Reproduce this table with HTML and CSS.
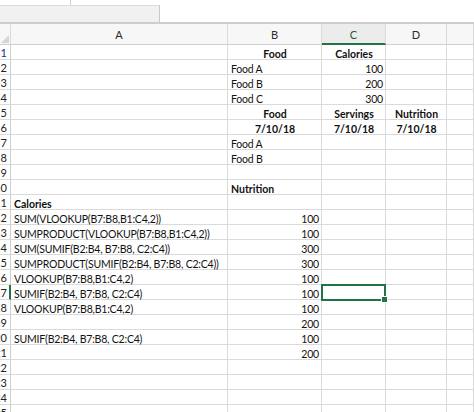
FILE: index.html
```html
<!DOCTYPE html>
<html>
<head>
<meta charset="utf-8">
<link rel="stylesheet" href="styles.css">
</head>
<body>
<div class="top">
  <div class="strip"><div class="vline"></div></div>
  <div class="strip2"><div class="namebox"></div></div>
  <div class="divider"></div>
</div>
<div class="sheet">
  <div class="hd corner"><div class="tri"></div></div>
  <div class="hd">A</div><div class="hd">B</div><div class="hd hsel">C</div><div class="hd">D</div><div class="hd"></div>

  <div class="rh rh-blue"><span>1</span></div><div class="c"></div><div class="c b ctr">Food</div><div class="c b ctr">Calories</div><div class="c"></div><div class="c"></div>
  <div class="rh"><span>2</span></div><div class="c"></div><div class="c">Food A</div><div class="c r">100</div><div class="c"></div><div class="c"></div>
  <div class="rh"><span>3</span></div><div class="c"></div><div class="c">Food B</div><div class="c r">200</div><div class="c"></div><div class="c"></div>
  <div class="rh"><span>4</span></div><div class="c"></div><div class="c">Food C</div><div class="c r">300</div><div class="c"></div><div class="c"></div>
  <div class="rh"><span>5</span></div><div class="c"></div><div class="c b ctr">Food</div><div class="c b ctr">Servings</div><div class="c b ctr">Nutrition</div><div class="c"></div>
  <div class="rh"><span>6</span></div><div class="c"></div><div class="c b ctr">7/10/18</div><div class="c b ctr">7/10/18</div><div class="c b ctr">7/10/18</div><div class="c"></div>
  <div class="rh"><span>7</span></div><div class="c"></div><div class="c">Food A</div><div class="c"></div><div class="c"></div><div class="c"></div>
  <div class="rh"><span>8</span></div><div class="c"></div><div class="c">Food B</div><div class="c"></div><div class="c"></div><div class="c"></div>
  <div class="rh"><span>9</span></div><div class="c"></div><div class="c"></div><div class="c"></div><div class="c"></div><div class="c"></div>
  <div class="rh"><span>10</span></div><div class="c"></div><div class="c b">Nutrition</div><div class="c"></div><div class="c"></div><div class="c"></div>
  <div class="rh"><span>11</span></div><div class="c b">Calories</div><div class="c"></div><div class="c"></div><div class="c"></div><div class="c"></div>
  <div class="rh"><span>12</span></div><div class="c">SUM(VLOOKUP(B7:B8,B1:C4,2))</div><div class="c r">100</div><div class="c"></div><div class="c"></div><div class="c"></div>
  <div class="rh"><span>13</span></div><div class="c">SUMPRODUCT(VLOOKUP(B7:B8,B1:C4,2))</div><div class="c r">100</div><div class="c"></div><div class="c"></div><div class="c"></div>
  <div class="rh"><span>14</span></div><div class="c">SUM(SUMIF(B2:B4, B7:B8, C2:C4))</div><div class="c r">300</div><div class="c"></div><div class="c"></div><div class="c"></div>
  <div class="rh"><span>15</span></div><div class="c">SUMPRODUCT(SUMIF(B2:B4, B7:B8, C2:C4))</div><div class="c r">300</div><div class="c"></div><div class="c"></div><div class="c"></div>
  <div class="rh"><span>16</span></div><div class="c">VLOOKUP(B7:B8,B1:C4,2)</div><div class="c r">100</div><div class="c"></div><div class="c"></div><div class="c"></div>
  <div class="rh rh-sel"><span>17</span></div><div class="c">SUMIF(B2:B4, B7:B8, C2:C4)</div><div class="c r">100</div><div class="c active"><div class="handle"></div></div><div class="c"></div><div class="c"></div>
  <div class="rh"><span>18</span></div><div class="c">VLOOKUP(B7:B8,B1:C4,2)</div><div class="c r">100</div><div class="c"></div><div class="c"></div><div class="c"></div>
  <div class="rh"><span>19</span></div><div class="c"></div><div class="c r">200</div><div class="c"></div><div class="c"></div><div class="c"></div>
  <div class="rh"><span>20</span></div><div class="c">SUMIF(B2:B4, B7:B8, C2:C4)</div><div class="c r">100</div><div class="c"></div><div class="c"></div><div class="c"></div>
  <div class="rh"><span>21</span></div><div class="c"></div><div class="c r">200</div><div class="c"></div><div class="c"></div><div class="c"></div>
  <div class="rh"><span>22</span></div><div class="c"></div><div class="c"></div><div class="c"></div><div class="c"></div><div class="c"></div>
  <div class="rh"><span>23</span></div><div class="c"></div><div class="c"></div><div class="c"></div><div class="c"></div><div class="c"></div>
  <div class="rh"><span>24</span></div><div class="c"></div><div class="c"></div><div class="c"></div><div class="c"></div><div class="c"></div>
  <div class="rh"><span>25</span></div><div class="c"></div><div class="c"></div><div class="c"></div><div class="c"></div><div class="c"></div>
</div>
</body>
</html>
```
FILE: styles.css
```css
html, body {
  margin: 0;
  padding: 0;
  background: #fff;
  overflow: hidden;
}
body {
  width: 474px;
  height: 412px;
  font-family: Lato, "Liberation Sans", sans-serif;
  color: #111;
}
.top {
  display: flex;
  flex-direction: column;
}
.strip {
  height: 5px;
  display: flex;
}
.vline {
  margin-left: 70px;
  width: 1px;
  background: #d0d0d0;
}
.strip2 {
  height: 17px;
  display: flex;
}
.namebox {
  width: 160px;
  box-sizing: border-box;
  background: #f1f1f1;
  border-top: 1px solid #dcdcdc;
  border-right: 1px solid #c8c8c8;
}
.divider {
  height: 2px;
  background: #cdcdcd;
}
.sheet {
  display: grid;
  grid-template-columns: 11px 217px 94px 64px 61px 1fr;
  grid-template-rows: 21px repeat(25, 15px);
}
.sheet > div {
  box-sizing: border-box;
  border-right: 1px solid #dadada;
  border-bottom: 1px solid #dadada;
  white-space: nowrap;
}
.hd {
  background: #f7f7f7;
  border-bottom-color: #cfcfcf !important;
  font-size: 11px;
  color: #2a2a2a;
  text-align: center;
  line-height: 21px;
}
.hsel {
  background: #ececec;
  border-bottom: 2px solid #217346 !important;
  color: #1f5c3a;
}
.corner {
  position: relative;
}
.tri {
  position: absolute;
  right: 1px;
  bottom: 1px;
  width: 0;
  height: 0;
  border-left: 8px solid transparent;
  border-bottom: 8px solid #d6d6d6;
}
.rh {
  display: flex;
  justify-content: flex-end;
  overflow: hidden;
  padding-right: 3px;
  font-size: 11px;
  line-height: 12px;
  padding-top: 2px;
  color: #222;
  border-right-color: #cfcfcf !important;
}
.rh span {
  flex: none;
}
.rh-blue {
  color: #1c2a8a;
}
.rh-sel {
  border-right: 2px solid #217346 !important;
  padding-right: 2px;
}
.c {
  font-size: 10.5px;
  letter-spacing: -0.2px;
  line-height: 12px;
  padding: 3px 2px 0 3px;
  overflow: visible;
}
.b {
  font-weight: bold;
  letter-spacing: 0;
}
.ctr {
  text-align: center;
}
.r {
  text-align: right;
  padding-right: 2px;
}
.active {
  position: relative;
}
.active::after {
  content: "";
  position: absolute;
  left: -1px;
  top: -1px;
  right: -1px;
  bottom: -2px;
  border: 2px solid #217346;
}
.handle {
  position: absolute;
  right: -3px;
  bottom: -4px;
  width: 5px;
  height: 5px;
  background: #217346;
  border: 1px solid #fff;
  z-index: 2;
}
```
